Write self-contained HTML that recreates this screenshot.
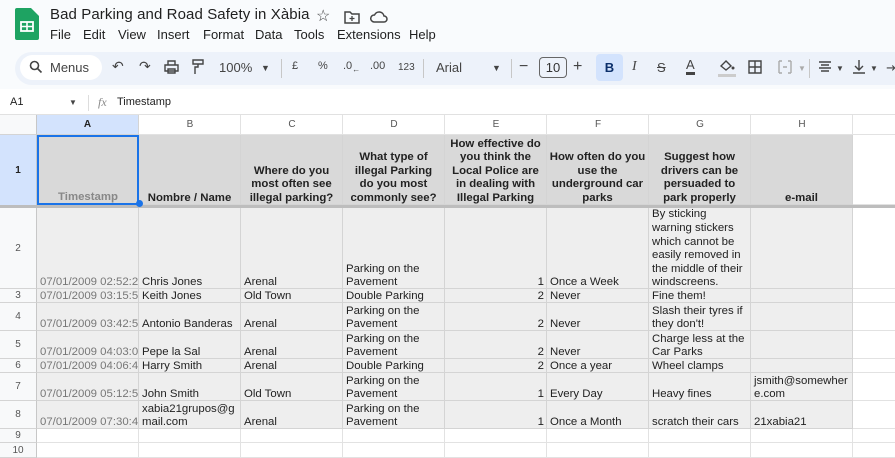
<!DOCTYPE html>
<html><head><meta charset="utf-8"><style>
*{box-sizing:border-box;margin:0;padding:0}
body{width:895px;height:458px;overflow:hidden;background:#f9fbfd;font-family:"Liberation Sans",Arial,sans-serif;position:relative;color:#1f1f1f}
.a{position:absolute;white-space:nowrap}
.title{left:50px;top:6px;font-size:15px;color:#1f1f1f;letter-spacing:0.1px}
.menu{top:27px;font-size:13px;color:#1f1f1f}
.tb{position:absolute;left:15px;top:52px;width:900px;height:33px;background:#edf2fa;border-radius:17px}
.ti{position:absolute;top:60px;font-size:12px;color:#444}
.fx{position:absolute;left:0;top:89px;width:895px;height:26px;background:#fff;border-bottom:1px solid #e1e1e1}
.grid{position:absolute;left:0;top:115px;width:895px;height:343px;background:#fff}
.row{position:absolute;left:0;display:flex;width:895px}
.c{width:102px;flex:none;border-right:1px solid #d4d4d4;border-bottom:1px solid #d4d4d4;background:#eeeeee;font-size:11.4px;line-height:13.6px;padding:0 2px 0 3px;display:flex;align-items:flex-end;overflow:hidden;white-space:nowrap;color:#222}
.c span{position:relative;top:2px}
.rh{width:37px;flex:none;background:#f8f9fa;border-right:1px solid #c7c7c7;border-bottom:1px solid #d4d4d4;font-size:10px;color:#555;display:flex;align-items:center;justify-content:center}
.e{background:#fff;border-color:#e2e2e2;width:60px}
.w{white-space:normal}
.r{justify-content:flex-end}
.h .c{background:#d9d9d9;font-weight:bold;justify-content:center;text-align:center;white-space:normal;padding:0 2px 0;line-height:13.4px}
.h .c span{top:1px}
.ts{color:#777}
</style></head><body>
<svg class="a" style="left:15px;top:8px" width="24" height="32" viewBox="0 0 24 32"><path d="M2 0h14l8 8v22a2 2 0 0 1-2 2H2a2 2 0 0 1-2-2V2a2 2 0 0 1 2-2z" fill="#1ea362"/><rect x="6" y="14" width="12" height="9" fill="none" stroke="#fff" stroke-width="1.8"/><path d="M6 18.5h12M12 14v9" stroke="#fff" stroke-width="1.6"/></svg>
<div class="a title">Bad Parking and Road Safety in Xàbia</div>
<div class="a" style="left:316px;top:6px;font-size:16px;color:#444">☆</div>
<svg class="a" style="left:344px;top:10px" width="16" height="14"><path d="M1 2h5l2 2h7v9H1z" fill="none" stroke="#444" stroke-width="1.5"/><path d="M8 6v5M5.5 8.5h5" stroke="#444" stroke-width="1.3"/></svg>
<svg class="a" style="left:370px;top:10px" width="18" height="14"><path d="M4 12h10a3 3 0 0 0 0-6 5 5 0 0 0-9.5-1A3.5 3.5 0 0 0 4 12z" fill="none" stroke="#444" stroke-width="1.5"/></svg>
<div class="a menu" style="left:50px">File</div><div class="a menu" style="left:83px">Edit</div><div class="a menu" style="left:118px">View</div><div class="a menu" style="left:157px">Insert</div><div class="a menu" style="left:203px">Format</div><div class="a menu" style="left:255px">Data</div><div class="a menu" style="left:294px">Tools</div><div class="a menu" style="left:337px">Extensions</div><div class="a menu" style="left:409px">Help</div>
<div class="tb"></div>
<div class="a" style="left:20px;top:55px;width:82px;height:25px;background:#fff;border-radius:13px"></div>
<svg class="a" style="left:29px;top:60px" width="14" height="14"><circle cx="5.5" cy="5.5" r="4" fill="none" stroke="#444" stroke-width="1.6"/><path d="M8.5 8.5l4 4" stroke="#444" stroke-width="1.6"/></svg>
<div class="ti" style="left:50px;top:60px;font-size:13px">Menus</div>
<div class="ti" style="left:112px;font-size:14px;top:58px">↶</div><div class="ti" style="left:139px;font-size:14px;top:58px">↷</div>
<svg class="a" style="left:164px;top:60px" width="15" height="14"><path d="M4 1h7v4H4zM1 5h13v6H1zM4 9h7v4H4z" fill="none" stroke="#444" stroke-width="1.4"/></svg>
<svg class="a" style="left:192px;top:59px" width="12" height="16"><path d="M1 1h10v4H1zM6 5v3H3v7" fill="none" stroke="#444" stroke-width="1.4"/></svg>
<div class="ti" style="left:219px;font-size:13px">100%</div><div class="ti" style="left:261px;font-size:9px;top:63px">▼</div>
<div class="a" style="left:281px;top:59px;width:1px;height:19px;background:#c7c7c7"></div>
<div class="ti" style="left:292px;font-size:11px">£</div><div class="ti" style="left:318px;font-size:11px">%</div>
<div class="ti" style="left:343px;font-size:11px">.0<sub style="font-size:8px">←</sub></div><div class="ti" style="left:370px;font-size:11px">.00</div>
<div class="ti" style="left:398px;font-size:10px;top:62px">123</div>
<div class="a" style="left:423px;top:59px;width:1px;height:19px;background:#c7c7c7"></div>
<div class="ti" style="left:436px;font-size:13px">Arial</div><div class="ti" style="left:492px;font-size:9px;top:63px">▼</div>
<div class="a" style="left:511px;top:59px;width:1px;height:19px;background:#c7c7c7"></div>
<div class="ti" style="left:519px;font-size:16px;top:58px">−</div>
<div class="a" style="left:539px;top:57px;width:28px;height:21px;border:1px solid #666;border-radius:4px;font-size:13px;text-align:center;line-height:19px;color:#333">10</div>
<div class="ti" style="left:573px;font-size:16px;top:58px">+</div>
<div class="a" style="left:596px;top:54px;width:27px;height:27px;background:#d3e3fd;border-radius:4px;font-weight:bold;font-size:13px;text-align:center;line-height:27px;color:#0b2f6b">B</div>
<div class="ti" style="left:632px;font-size:14px;font-style:italic;font-family:'Liberation Serif',serif;top:59px">I</div>
<div class="ti" style="left:657px;font-size:13px;text-decoration:line-through;top:60px">S</div>
<div class="ti" style="left:686px;font-size:13px;top:58px;border-bottom:3px solid #444;line-height:14px">A</div>
<svg class="a" style="left:718px;top:58px" width="18" height="20"><path d="M3 8l5-5 5 5-5 4z" fill="none" stroke="#444" stroke-width="1.4"/><circle cx="15" cy="10" r="1.5" fill="#444"/><rect x="0" y="16" width="18" height="3" fill="#ccc"/></svg>
<svg class="a" style="left:748px;top:60px" width="14" height="14"><path d="M1 1h12v12H1zM7 1v12M1 7h12" fill="none" stroke="#444" stroke-width="1.4"/></svg>
<svg class="a" style="left:778px;top:60px" width="14" height="14"><path d="M1 1h3M10 1h3M1 13h3M10 13h3M1 1v12M13 1v12M5 7h4" fill="none" stroke="#aaa" stroke-width="1.4"/></svg>
<div class="ti" style="left:798px;font-size:8px;top:64px;color:#aaa">▼</div>
<div class="a" style="left:809px;top:59px;width:1px;height:19px;background:#c7c7c7"></div>
<svg class="a" style="left:818px;top:60px" width="14" height="14"><path d="M1 2h12M3 5h8M1 8h12M3 11h8" stroke="#444" stroke-width="1.4"/></svg>
<div class="ti" style="left:836px;font-size:8px;top:64px">▼</div>
<svg class="a" style="left:852px;top:59px" width="14" height="16"><path d="M7 1v10M3 7l4 4 4-4M1 14h12" fill="none" stroke="#444" stroke-width="1.4"/></svg>
<div class="ti" style="left:870px;font-size:8px;top:64px">▼</div>
<div class="ti" style="left:886px;font-size:13px">⇥</div>
<div class="fx"></div>
<div class="a" style="left:10px;top:96px;font-size:11px">A1</div>
<div class="a" style="left:69px;top:98px;font-size:8px;color:#444">▼</div>
<div class="a" style="left:88px;top:95px;width:1px;height:16px;background:#ddd"></div>
<div class="a" style="left:98px;top:95px;font-size:12px;font-style:italic;font-family:'Liberation Serif',serif;color:#888">fx</div>
<div class="a" style="left:117px;top:96px;font-size:11px">Timestamp</div>
<div class="grid"></div>
<div class="row" style="top:115px;height:20px">
<div class="rh" style="background:#f8f9fa"></div>
<div class="c" style="background:#d3e3fd;justify-content:center;align-items:center;font-size:10px;font-weight:bold;padding:0">A</div>
<div class="c" style="background:#fff;border-color:#e2e2e2;justify-content:center;align-items:center;font-size:10px;color:#555">B</div>
<div class="c" style="background:#fff;border-color:#e2e2e2;justify-content:center;align-items:center;font-size:10px;color:#555">C</div>
<div class="c" style="background:#fff;border-color:#e2e2e2;justify-content:center;align-items:center;font-size:10px;color:#555">D</div>
<div class="c" style="background:#fff;border-color:#e2e2e2;justify-content:center;align-items:center;font-size:10px;color:#555">E</div>
<div class="c" style="background:#fff;border-color:#e2e2e2;justify-content:center;align-items:center;font-size:10px;color:#555">F</div>
<div class="c" style="background:#fff;border-color:#e2e2e2;justify-content:center;align-items:center;font-size:10px;color:#555">G</div>
<div class="c" style="background:#fff;border-color:#e2e2e2;justify-content:center;align-items:center;font-size:10px;color:#555">H</div>
<div class="c e"></div></div>
<div class="row h" style="top:135px;height:73px;border-bottom:3px solid #bdbdbd">
<div class="rh" style="background:#d3e3fd;font-weight:bold;color:#222;border-bottom:none">1</div>
<div class="c ts" style="color:#888;border:2px solid #1a73e8"><span>Timestamp</span></div>
<div class="c"><span>Nombre / Name</span></div>
<div class="c"><span>Where do you<br>most often see<br>illegal parking?</span></div>
<div class="c"><span>What type of<br>illegal Parking<br>do you most<br>commonly see?</span></div>
<div class="c"><span>How effective do<br>you think the<br>Local Police are<br>in dealing with<br>Illegal Parking</span></div>
<div class="c"><span>How often do you<br>use the<br>underground car<br>parks</span></div>
<div class="c"><span>Suggest how<br>drivers can be<br>persuaded to<br>park properly</span></div>
<div class="c"><span>e-mail</span></div>
<div class="c e" style="background:#fff"></div></div>
<div class="a" style="left:136px;top:200px;width:7px;height:7px;border-radius:50%;background:#1a73e8"></div>

<div class="row" style="top:208px;height:81px"><div class="rh">2</div><div class="c ts"><span>07/01/2009 02:52:29</span></div><div class="c"><span>Chris Jones</span></div><div class="c"><span>Arenal</span></div><div class="c w"><span>Parking on the Pavement</span></div><div class="c r"><span>1</span></div><div class="c"><span>Once a Week</span></div><div class="c w"><span>By sticking warning stickers which cannot be easily removed in the middle of their windscreens.</span></div><div class="c"></div><div class="c e"></div></div>
<div class="row" style="top:289px;height:14px"><div class="rh">3</div><div class="c ts"><span>07/01/2009 03:15:53</span></div><div class="c"><span>Keith Jones</span></div><div class="c"><span>Old Town</span></div><div class="c"><span>Double Parking</span></div><div class="c r"><span>2</span></div><div class="c"><span>Never</span></div><div class="c"><span>Fine them!</span></div><div class="c"></div><div class="c e"></div></div>
<div class="row" style="top:303px;height:28px"><div class="rh">4</div><div class="c ts"><span>07/01/2009 03:42:57</span></div><div class="c"><span>Antonio Banderas</span></div><div class="c"><span>Arenal</span></div><div class="c w"><span>Parking on the Pavement</span></div><div class="c r"><span>2</span></div><div class="c"><span>Never</span></div><div class="c w"><span>Slash their tyres if they don't!</span></div><div class="c"></div><div class="c e"></div></div>
<div class="row" style="top:331px;height:28px"><div class="rh">5</div><div class="c ts"><span>07/01/2009 04:03:07</span></div><div class="c"><span>Pepe la Sal</span></div><div class="c"><span>Arenal</span></div><div class="c w"><span>Parking on the Pavement</span></div><div class="c r"><span>2</span></div><div class="c"><span>Never</span></div><div class="c w"><span>Charge less at the Car Parks</span></div><div class="c"></div><div class="c e"></div></div>
<div class="row" style="top:359px;height:14px"><div class="rh">6</div><div class="c ts"><span>07/01/2009 04:06:49</span></div><div class="c"><span>Harry Smith</span></div><div class="c"><span>Arenal</span></div><div class="c"><span>Double Parking</span></div><div class="c r"><span>2</span></div><div class="c"><span>Once a year</span></div><div class="c"><span>Wheel clamps</span></div><div class="c"></div><div class="c e"></div></div>
<div class="row" style="top:373px;height:28px"><div class="rh">7</div><div class="c ts"><span>07/01/2009 05:12:50</span></div><div class="c"><span>John Smith</span></div><div class="c"><span>Old Town</span></div><div class="c w"><span>Parking on the Pavement</span></div><div class="c r"><span>1</span></div><div class="c"><span>Every Day</span></div><div class="c"><span>Heavy fines</span></div><div class="c w" style="word-break:break-all"><span>jsmith@somewhere.com</span></div><div class="c e"></div></div>
<div class="row" style="top:401px;height:28px"><div class="rh">8</div><div class="c ts"><span>07/01/2009 07:30:42</span></div><div class="c w" style="word-break:break-all"><span>xabia21grupos@gmail.com</span></div><div class="c"><span>Arenal</span></div><div class="c w"><span>Parking on the Pavement</span></div><div class="c r"><span>1</span></div><div class="c"><span>Once a Month</span></div><div class="c"><span>scratch their cars</span></div><div class="c"><span>21xabia21</span></div><div class="c e"></div></div>
<div class="row" style="top:429px;height:14px"><div class="rh">9</div><div class="c e" style="width:102px"></div><div class="c e" style="width:102px"></div><div class="c e" style="width:102px"></div><div class="c e" style="width:102px"></div><div class="c e" style="width:102px"></div><div class="c e" style="width:102px"></div><div class="c e" style="width:102px"></div><div class="c e" style="width:102px"></div><div class="c e"></div></div>
<div class="row" style="top:443px;height:15px"><div class="rh">10</div><div class="c e" style="width:102px"></div><div class="c e" style="width:102px"></div><div class="c e" style="width:102px"></div><div class="c e" style="width:102px"></div><div class="c e" style="width:102px"></div><div class="c e" style="width:102px"></div><div class="c e" style="width:102px"></div><div class="c e" style="width:102px"></div><div class="c e"></div></div>
</body></html>
